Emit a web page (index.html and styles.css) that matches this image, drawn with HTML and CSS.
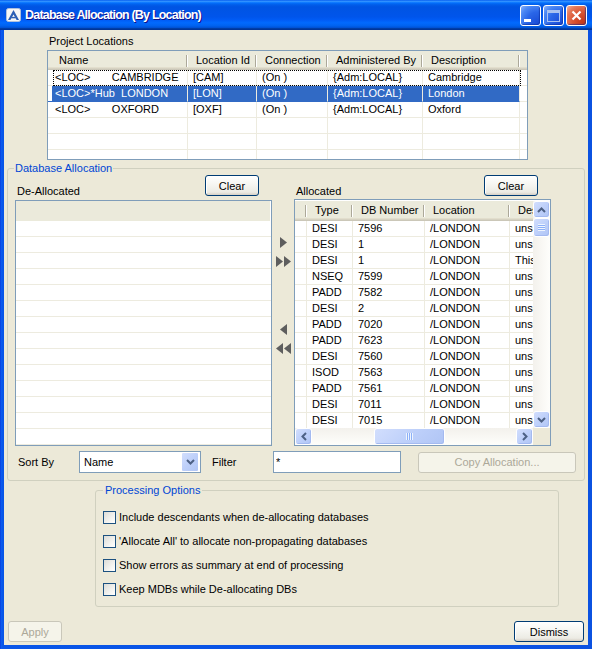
FILE: index.html
```html
<!DOCTYPE html>
<html lang="en">
  <head>
    <meta charset="UTF-8" />
    <meta name="viewport" content="width=device-width, initial-scale=1.0" />
    <title>Database Allocation (By Location)</title>
    <link rel="stylesheet" href="styles.css">
  </head>
  <body>
    <div class="window">
      <!-- Title bar -->
      <div class="titlebar">
        <svg class="app-icon" width="15" height="14" viewBox="0 0 15 14">
          <rect x="0.5" y="0.5" width="14" height="13" rx="2" fill="#F6F6F6" stroke="#AFC0DC" />
          <path d="M7.5 2 L13 12 H10.6 L7.5 6.4 L4.4 12 H2 Z" fill="#2C5FB5" />
          <path d="M5.2 9.6 H9.8" stroke="#2C5FB5" stroke-width="1.4" />
        </svg>
        <span class="title">Database Allocation (By Location)</span>
        <div class="title-buttons">
          <button class="tb-btn tb-min"><span class="min-bar"></span></button>
          <button class="tb-btn tb-max"><span class="max-box"></span></button>
          <button class="tb-btn tb-close">
            <svg width="11" height="11" viewBox="0 0 11 11">
              <path d="M1.5 1.5 L9.5 9.5 M9.5 1.5 L1.5 9.5" stroke="#fff" stroke-width="2.2" />
            </svg>
          </button>
        </div>
      </div>

      <div class="client">
        <!-- Project locations -->
        <div class="caption">Project Locations</div>
        <div class="listview locations">
          <div class="lv-head">
            <div class="th">Name</div>
            <div class="th">Location Id</div>
            <div class="th">Connection</div>
            <div class="th">Administered By</div>
            <div class="th">Description</div>
            <div class="th filler"></div>
          </div>
          <div class="lv-row focus">
            <div class="td">&lt;LOC&gt;       CAMBRIDGE</div>
            <div class="td">[CAM]</div>
            <div class="td">(On )</div>
            <div class="td">{Adm:LOCAL}</div>
            <div class="td">Cambridge</div>
            <div class="td filler"></div>
          </div>
          <div class="lv-row selected">
            <div class="td">&lt;LOC&gt;*Hub  LONDON</div>
            <div class="td">[LON]</div>
            <div class="td">(On )</div>
            <div class="td">{Adm:LOCAL}</div>
            <div class="td">London</div>
            <div class="td filler"></div>
          </div>
          <div class="lv-row">
            <div class="td">&lt;LOC&gt;       OXFORD</div>
            <div class="td">[OXF]</div>
            <div class="td">(On )</div>
            <div class="td">{Adm:LOCAL}</div>
            <div class="td">Oxford</div>
            <div class="td filler"></div>
          </div>
          <div class="lv-row">
            <div class="td"></div><div class="td"></div><div class="td"></div>
            <div class="td"></div><div class="td"></div><div class="td filler"></div>
          </div>
          <div class="lv-row">
            <div class="td"></div><div class="td"></div><div class="td"></div>
            <div class="td"></div><div class="td"></div><div class="td filler"></div>
          </div>
          <div class="lv-row">
            <div class="td"></div><div class="td"></div><div class="td"></div>
            <div class="td"></div><div class="td"></div><div class="td filler"></div>
          </div>
        </div>

        <!-- Database allocation -->
        <fieldset class="group alloc-group">
          <legend>Database Allocation</legend>
          <div class="alloc-grid">
            <div class="pane">
              <div class="pane-top">
                <span class="pane-label">De-Allocated</span>
                <button class="btn btn-clear">Clear</button>
              </div>
              <div class="plain-list">
                <div class="plain-head"></div>
                <div class="plain-row"></div><div class="plain-row"></div>
                <div class="plain-row"></div><div class="plain-row"></div>
                <div class="plain-row"></div><div class="plain-row"></div>
                <div class="plain-row"></div><div class="plain-row"></div>
                <div class="plain-row"></div><div class="plain-row"></div>
                <div class="plain-row"></div><div class="plain-row"></div>
                <div class="plain-row"></div><div class="plain-row"></div>
              </div>
            </div>

            <div class="movers">
              <button class="mover">
                <svg width="7" height="11" viewBox="0 0 7 11"><path d="M0 0 L7 5.5 L0 11 Z" fill="#5E5E5E" /></svg>
              </button>
              <button class="mover">
                <svg width="15" height="11" viewBox="0 0 15 11"><path d="M0 0 L7 5.5 L0 11 Z M8 0 L15 5.5 L8 11 Z" fill="#5E5E5E" /></svg>
              </button>
              <button class="mover gap-before">
                <svg width="7" height="11" viewBox="0 0 7 11"><path d="M7 0 L0 5.5 L7 11 Z" fill="#5E5E5E" /></svg>
              </button>
              <button class="mover">
                <svg width="15" height="11" viewBox="0 0 15 11"><path d="M7 0 L0 5.5 L7 11 Z M15 0 L8 5.5 L15 11 Z" fill="#5E5E5E" /></svg>
              </button>
            </div>

            <div class="pane">
              <div class="pane-top">
                <span class="pane-label">Allocated</span>
                <button class="btn btn-clear">Clear</button>
              </div>
              <div class="grid-box">
                <div class="grid-view">
                  <div class="gv-head">
                    <div class="th"></div>
                    <div class="th">Type</div>
                    <div class="th">DB Number</div>
                    <div class="th">Location</div>
                    <div class="th">Description</div>
                  </div>
                  <div class="gv-row"><div class="td"></div><div class="td">DESI</div><div class="td">7596</div><div class="td">/LONDON</div><div class="td">unset</div></div>
                  <div class="gv-row"><div class="td"></div><div class="td">DESI</div><div class="td">1</div><div class="td">/LONDON</div><div class="td">unset</div></div>
                  <div class="gv-row"><div class="td"></div><div class="td">DESI</div><div class="td">1</div><div class="td">/LONDON</div><div class="td">This</div></div>
                  <div class="gv-row"><div class="td"></div><div class="td">NSEQ</div><div class="td">7599</div><div class="td">/LONDON</div><div class="td">unset</div></div>
                  <div class="gv-row"><div class="td"></div><div class="td">PADD</div><div class="td">7582</div><div class="td">/LONDON</div><div class="td">unset</div></div>
                  <div class="gv-row"><div class="td"></div><div class="td">DESI</div><div class="td">2</div><div class="td">/LONDON</div><div class="td">unset</div></div>
                  <div class="gv-row"><div class="td"></div><div class="td">PADD</div><div class="td">7020</div><div class="td">/LONDON</div><div class="td">unset</div></div>
                  <div class="gv-row"><div class="td"></div><div class="td">PADD</div><div class="td">7623</div><div class="td">/LONDON</div><div class="td">unset</div></div>
                  <div class="gv-row"><div class="td"></div><div class="td">DESI</div><div class="td">7560</div><div class="td">/LONDON</div><div class="td">unset</div></div>
                  <div class="gv-row"><div class="td"></div><div class="td">ISOD</div><div class="td">7563</div><div class="td">/LONDON</div><div class="td">unset</div></div>
                  <div class="gv-row"><div class="td"></div><div class="td">PADD</div><div class="td">7561</div><div class="td">/LONDON</div><div class="td">unset</div></div>
                  <div class="gv-row"><div class="td"></div><div class="td">DESI</div><div class="td">7011</div><div class="td">/LONDON</div><div class="td">unset</div></div>
                  <div class="gv-row"><div class="td"></div><div class="td">DESI</div><div class="td">7015</div><div class="td">/LONDON</div><div class="td">unset</div></div>
                </div>

                <!-- vertical scrollbar -->
                <div class="vscroll">
                  <span class="sb-btn">
                    <svg width="9" height="6" viewBox="0 0 9 6"><path d="M1 5 L4.5 1.5 L8 5" fill="none" stroke="#4D6185" stroke-width="2" /></svg>
                  </span>
                  <span class="sb-thumb v-thumb"><span class="grip-h"></span></span>
                  <span class="sb-track"></span>
                  <span class="sb-btn">
                    <svg width="9" height="6" viewBox="0 0 9 6"><path d="M1 1 L4.5 4.5 L8 1" fill="none" stroke="#4D6185" stroke-width="2" /></svg>
                  </span>
                </div>

                <!-- horizontal scrollbar -->
                <div class="hscroll">
                  <span class="sb-btn">
                    <svg width="6" height="9" viewBox="0 0 6 9"><path d="M5 1 L1.5 4.5 L5 8" fill="none" stroke="#4D6185" stroke-width="2" /></svg>
                  </span>
                  <span class="sb-track lead"></span>
                  <span class="sb-thumb h-thumb"><span class="grip-v"></span></span>
                  <span class="sb-track"></span>
                  <span class="sb-btn">
                    <svg width="6" height="9" viewBox="0 0 6 9"><path d="M1 1 L4.5 4.5 L1 8" fill="none" stroke="#4D6185" stroke-width="2" /></svg>
                  </span>
                </div>
                <div class="sb-corner"></div>
              </div>
            </div>
          </div>

          <!-- Sort / filter -->
          <div class="sort-row">
            <span class="sort-label">Sort By</span>
            <div class="combo">
              <span class="combo-text">Name</span>
              <span class="combo-drop">
                <svg width="9" height="6" viewBox="0 0 9 6"><path d="M1 1 L4.5 4.5 L8 1" fill="none" stroke="#4D6185" stroke-width="2" /></svg>
              </span>
            </div>
            <span class="filter-label">Filter</span>
            <input class="filter-input" type="text" value="*" />
            <button class="btn btn-copy" disabled>Copy Allocation...</button>
          </div>
        </fieldset>

        <!-- Processing options -->
        <fieldset class="group options">
          <legend>Processing Options</legend>
          <label class="check"><span class="check-box"></span>Include descendants when de-allocating databases</label>
          <label class="check"><span class="check-box"></span>'Allocate All' to allocate non-propagating databases</label>
          <label class="check"><span class="check-box"></span>Show errors as summary at end of processing</label>
          <label class="check"><span class="check-box"></span>Keep MDBs while De-allocating DBs</label>
        </fieldset>

        <!-- Footer buttons -->
        <div class="footer">
          <button class="btn btn-apply" disabled>Apply</button>
          <button class="btn btn-dismiss">Dismiss</button>
        </div>
      </div>
    </div>
  </body>
</html>
```

FILE: styles.css
```css
/* page */
body {
  margin: 0;
  font-family: "Liberation Sans", Arial, sans-serif;
  font-size: 11px;
  color: #000;
  background: #fff;
}

button,
input {
  font-family: inherit;
  font-size: 11px;
  color: #000;
}

/* window frame */
.window {
  width: 592px;
  height: 649px;
  display: flex;
  flex-direction: column;
  background: linear-gradient(to right, #0831D9 0, #0B5CEF 1px, #0855E8 3px, #0B52E1 100%);
}

/* title bar */
.titlebar {
  height: 30px;
  flex: none;
  display: flex;
  align-items: center;
  padding: 0 5px 0 6px;
  background: linear-gradient(to bottom, #0058EE 0%, #3593FF 4%, #288EFF 6%, #127DFF 8%, #036FFC 10%, #0262EE 14%, #0057E5 20%, #0054E3 24%, #0055EB 56%, #005BF5 66%, #026AFE 76%, #0062EF 86%, #0052D6 92%, #0040AB 94%, #003092 100%);
}

.app-icon {
  margin-right: 4px;
  flex: none;
}

.title {
  color: #fff;
  font-weight: bold;
  font-size: 12.5px;
  letter-spacing: -0.8px;
  text-shadow: 1px 1px #0F1089;
  white-space: nowrap;
}

.title-buttons {
  margin-left: auto;
  display: flex;
  gap: 2px;
  margin-top: 1px;
}

.tb-btn {
  width: 21px;
  height: 21px;
  padding: 0;
  border: 1px solid #fff;
  border-radius: 3px;
  display: flex;
  align-items: center;
  justify-content: center;
  position: relative;
  background: radial-gradient(circle at 85% 85%, #1B4FD8 0%, #2A66E8 45%, #4C88F4 75%, #8BB2FA 100%);
  box-shadow: inset -1px -1px 1px rgba(0, 30, 140, 0.5);
}

.tb-close {
  background: radial-gradient(circle at 85% 85%, #C5381A 0%, #DA5534 45%, #E57A5A 75%, #F2B29C 100%);
}

.min-bar {
  width: 7px;
  height: 3px;
  background: #fff;
  align-self: flex-end;
  margin: 0 7px 3px 0;
}

.max-box {
  width: 13px;
  height: 12px;
  box-sizing: border-box;
  border: 1px solid #A9C2F0;
  border-top-width: 3px;
}

/* client area */
.client {
  flex: 1;
  margin: 0 4px 4px;
  background: #ECE9D8;
  display: flex;
  flex-direction: column;
}

.caption {
  margin: 4px 0 2px 45px;
  line-height: 14px;
}

/* list views */
.listview {
  border: 1px solid #7F9DB9;
  background: #fff;
  overflow: hidden;
}

.locations {
  margin-left: 43px;
  width: 481px;
  height: 110px;
  box-sizing: border-box;
}

.lv-head,
.lv-row {
  display: grid;
  grid-template-columns: 140px 69px 71px 95px 97px 7px;
}

.lv-head,
.gv-head {
  background: #EBEADB;
  box-shadow: inset 0 -1px #CBC7B8, inset 0 -2px #D6D2C2, inset 0 -3px #E2DECD;
}

.lv-head {
  height: 19px;
}

.th {
  line-height: 19px;
  padding-left: 8px;
  white-space: nowrap;
  overflow: hidden;
  background:
    linear-gradient(#ACA899, #ACA899) right 1px top 4px / 1px 12px no-repeat,
    linear-gradient(#fff, #fff) right 0 top 4px / 1px 12px no-repeat;
}

.lv-head .th:first-child {
  padding-left: 11px;
}

.th.filler {
  background: none;
}

.td {
  height: 16px;
  line-height: 15px;
  box-sizing: border-box;
  padding-left: 5px;
  border-right: 1px solid #EDEBDF;
  border-bottom: 1px solid #EDEBDF;
  white-space: pre;
  overflow: hidden;
}

.lv-row .td:first-child {
  padding-left: 4px;
  text-indent: 3px;
  background-clip: content-box;
}

.td.filler {
  border-right: none;
}

.lv-row.selected .td {
  background-color: #316AC5;
  color: #fff;
  border-bottom-color: #316AC5;
}

.lv-row.selected .td.filler {
  background-color: transparent;
  border-bottom-color: #EDEBDF;
}

.lv-row.focus {
  position: relative;
}

.lv-row.focus::after {
  content: "";
  position: absolute;
  left: 5px;
  top: 0;
  width: 468px;
  height: 16px;
  box-sizing: border-box;
  border: 1px dotted #000;
}

/* group boxes */
.group {
  margin: 0;
  border: 1px solid #D0D0BF;
  border-radius: 3px;
  min-width: 0;
  box-sizing: border-box;
}

.group legend {
  color: #0046D5;
  line-height: 14px;
  padding: 0 2px;
}

.alloc-group {
  margin: 1px 0 0 3px;
  width: 578px;
  padding: 0 7px 7px 7px;
}

.alloc-group legend {
  margin-left: -1px;
  padding: 0 1px;
}

.alloc-grid {
  display: grid;
  grid-template-columns: 257px 22px 257px;
}

.pane-top {
  height: 24px;
  display: flex;
  align-items: flex-start;
}

.pane-label {
  align-self: flex-end;
  line-height: 14px;
  margin: 0 0 1px 2px;
}

/* buttons */
.btn {
  height: 21px;
  padding: 0;
  border: 1px solid #003C74;
  border-radius: 3px;
  background: linear-gradient(to bottom, #FFFFFF 0%, #F7F7F3 40%, #ECEBE4 85%, #D6D0C5 100%);
  box-shadow: inset 1px 1px #fff;
}

.btn:disabled {
  border-color: #C9C7BA;
  background: #F5F4EA;
  color: #ACA899;
  box-shadow: none;
}

.btn-clear {
  width: 54px;
  margin-left: auto;
  margin-right: 13px;
}

/* de-allocated list */
.plain-list {
  margin-top: 1px;
  height: 246px;
  box-sizing: border-box;
  border: 1px solid #7F9DB9;
  background: #fff;
  overflow: hidden;
}

.plain-head {
  height: 20px;
  background: #EBEADB;
  margin-right: 1px;
}

.plain-row {
  height: 16px;
  box-sizing: border-box;
  border-bottom: 1px solid #EDEBDF;
}

/* move arrows */
.movers {
  display: flex;
  flex-direction: column;
  align-items: center;
  padding-top: 62px;
  gap: 8px;
}

.mover {
  border: none;
  background: transparent;
  padding: 0;
  display: block;
  height: 11px;
  line-height: 0;
}

.mover.gap-before {
  margin-top: 49px;
}

/* allocated grid */
.grid-box {
  height: 247px;
  box-sizing: border-box;
  border: 1px solid #7F9DB9;
  padding-top: 1px;
  background: #fff;
  display: grid;
  grid-template-columns: 238px 17px;
  grid-template-rows: 227px 17px;
}

.grid-view {
  overflow: hidden;
}

.gv-head,
.gv-row {
  display: grid;
  grid-template-columns: 12px 46px 72px 85px 80px;
}

.gv-head {
  height: 20px;
}

.gv-head .th {
  line-height: 19px;
}

.gv-head .th:first-child {
  padding-left: 0;
}

/* scrollbars */
.vscroll,
.hscroll {
  display: flex;
  background: linear-gradient(to right, #F3F1EC, #FEFEFB);
}

.vscroll {
  flex-direction: column;
}

.hscroll {
  background: linear-gradient(to bottom, #F3F1EC, #FEFEFB);
}

.sb-btn,
.sb-thumb {
  flex: none;
  box-sizing: border-box;
  border: 1px solid #fff;
  border-radius: 3px;
  background: linear-gradient(135deg, #D2DEFD 0%, #BED0FA 50%, #B0C5F5 100%);
  box-shadow: inset -1px -1px #A4BAF0;
  display: flex;
  align-items: center;
  justify-content: center;
}

.sb-btn {
  width: 17px;
  height: 17px;
}

.sb-track {
  flex: 1;
}

.sb-track.lead {
  flex: none;
  width: 62px;
}

.v-thumb {
  width: 17px;
  height: 19px;
}

.h-thumb {
  width: 71px;
  height: 17px;
}

.grip-h {
  width: 7px;
  height: 7px;
  background: repeating-linear-gradient(to bottom, #EEF4FE 0, #EEF4FE 1px, #8CB0F8 1px, #8CB0F8 2px);
}

.grip-v {
  width: 7px;
  height: 7px;
  background: repeating-linear-gradient(to right, #EEF4FE 0, #EEF4FE 1px, #8CB0F8 1px, #8CB0F8 2px);
}

.sb-corner {
  background: #ECE9D8;
}

/* sort and filter row */
.sort-row {
  margin-top: 5px;
  height: 22px;
  display: flex;
  align-items: center;
}

.sort-label {
  width: 64px;
  padding-left: 3px;
  box-sizing: border-box;
}

.combo {
  width: 122px;
  height: 22px;
  box-sizing: border-box;
  border: 1px solid #7F9DB9;
  background: #fff;
  display: flex;
  align-items: center;
  padding: 1px;
}

.combo-text {
  flex: 1;
  padding-left: 3px;
}

.combo-drop {
  width: 16px;
  height: 18px;
  border-radius: 2px;
  border: 1px solid #fff;
  background: linear-gradient(135deg, #D2DEFD 0%, #BED0FA 50%, #B0C5F5 100%);
  display: flex;
  align-items: center;
  justify-content: center;
}

.filter-label {
  width: 72px;
  padding-left: 11px;
  box-sizing: border-box;
}

.filter-input {
  width: 128px;
  height: 22px;
  box-sizing: border-box;
  border: 1px solid #7F9DB9;
  padding: 0 2px;
  outline: none;
}

.btn-copy {
  width: 158px;
  margin-left: 17px;
}

/* processing options */
.options {
  margin: 2px 0 0 91px;
  width: 464px;
  padding: 8px 7px 5px 7px;
}

.check {
  height: 24px;
  display: flex;
  align-items: center;
}

.check-box {
  width: 13px;
  height: 13px;
  box-sizing: border-box;
  border: 1px solid #1C5180;
  background: linear-gradient(135deg, #DCDCD7 0%, #F6F6F3 70%, #FFFFFF 100%);
  margin-right: 3px;
}

/* footer */
.footer {
  margin-top: 14px;
  display: flex;
  justify-content: space-between;
  padding: 0 4px 0 4px;
}

.btn-apply {
  width: 54px;
}

.btn-dismiss {
  width: 70px;
}
```
